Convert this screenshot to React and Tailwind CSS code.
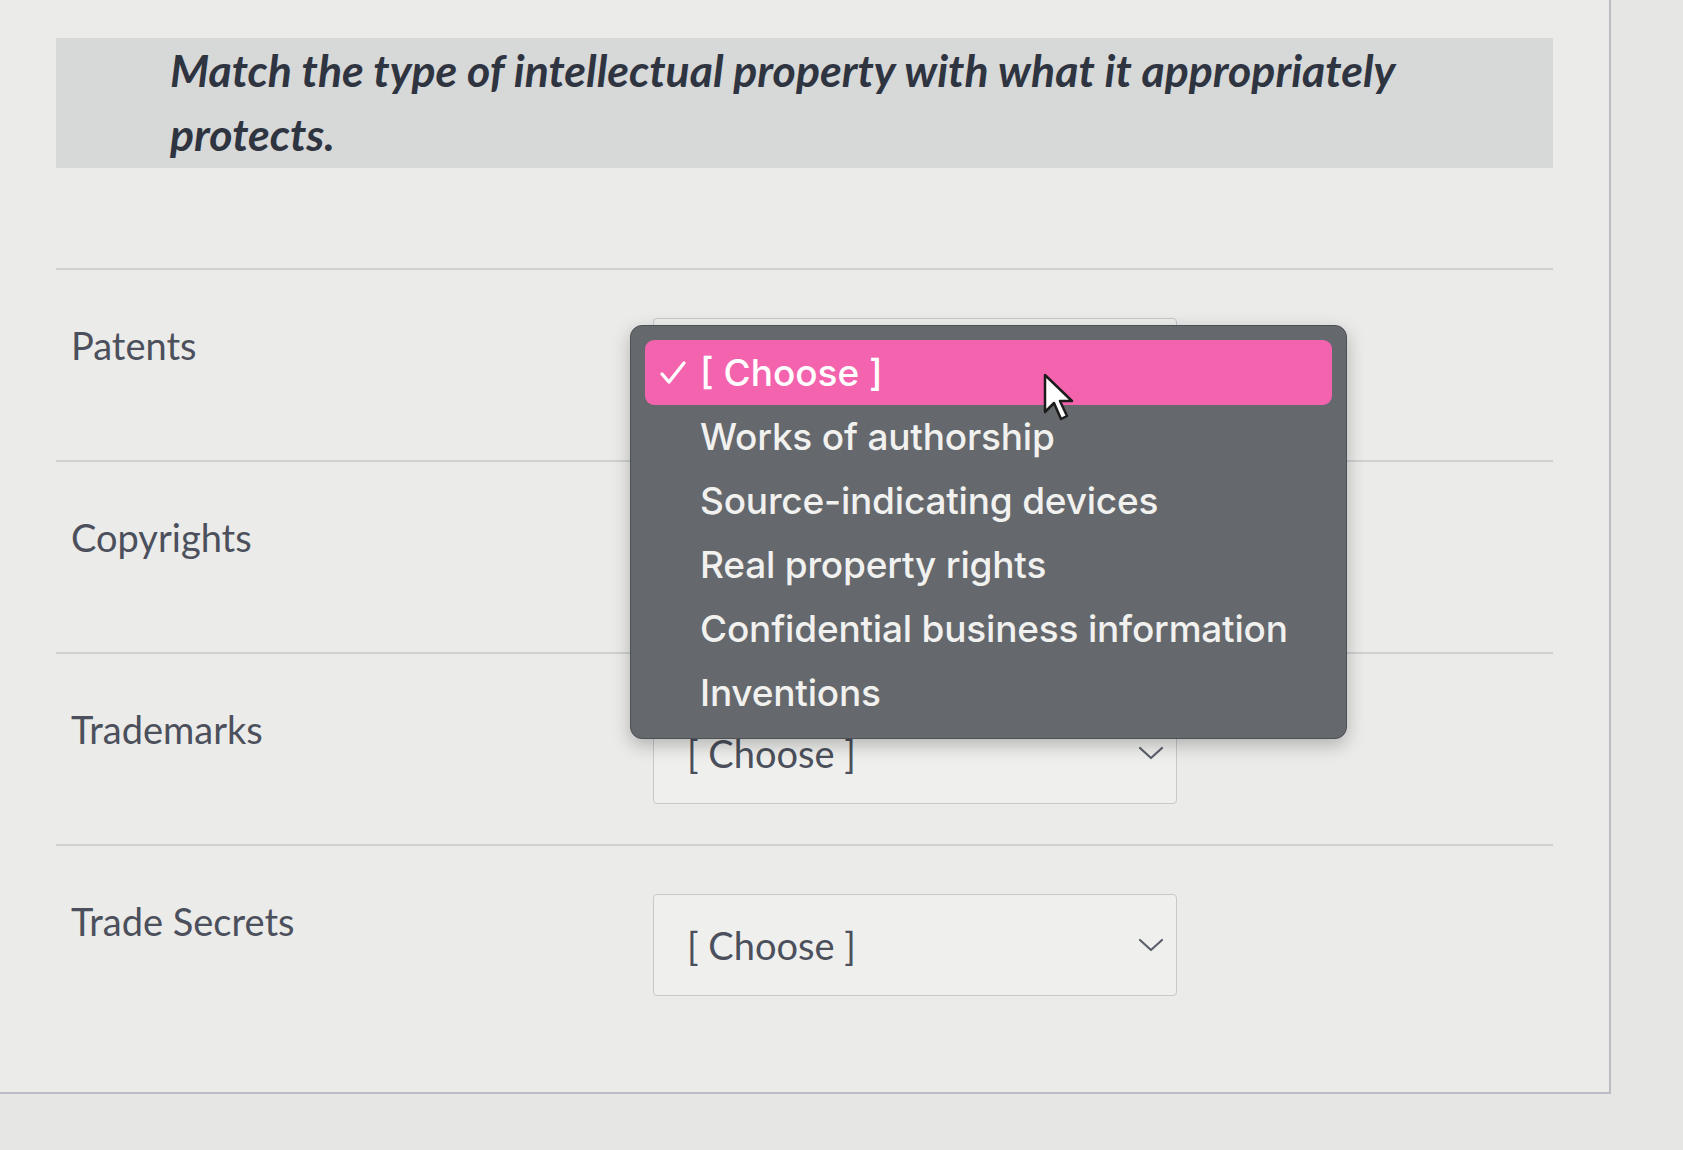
import React from 'react';

const rows = ['Patents', 'Copyrights', 'Trademarks', 'Trade Secrets'];
const options = [
    'Works of authorship',
    'Source-indicating devices',
    'Real property rights',
    'Confidential business information',
    'Inventions',
];

const Chevron = () => (
    <svg width="26" height="14" viewBox="0 0 26 14" fill="none">
        <path d="M2 2 L13 12 L24 2" stroke="#5a5f6b" strokeWidth="2.2" strokeLinecap="round" strokeLinejoin="round" />
    </svg>
);

const Check = () => (
    <svg width="28" height="26" viewBox="0 0 28 26" fill="none">
        <path d="M3 14 L10 22 L25 3" stroke="#ffffff" strokeWidth="3.4" strokeLinecap="round" strokeLinejoin="round" />
    </svg>
);

const Select = () => (
    <div className="flex h-[102px] w-[524px] items-center justify-between rounded-[4px] border border-[#c7c8ca] bg-[#efefed] pl-[33px] pr-[12px]">
        <span className="text-[38px] text-[#4b505c]">[ Choose ]</span>
        <Chevron />
    </div>
);

const Dropdown = () => (
    <div className="absolute left-[630px] top-[325px] w-[717px] rounded-[12px] border border-[#4d5054] bg-[#65686c] px-[14px] pb-[13px] pt-[14px] shadow-[0_6px_18px_rgba(0,0,0,0.25)] [font-family:Inter,'Liberation_Sans',sans-serif]">
        <div className="flex h-[65px] items-center rounded-[9px] bg-[#f463ae] pl-[14px] text-[37px] font-medium text-white">
            <span className="flex w-[41px] items-center">
                <Check />
            </span>
            <span>[ Choose ]</span>
        </div>
        {options.map((o) => (
            <div key={o} className="flex h-[64px] items-center pl-[55px] text-[37px] font-medium tracking-[-0.2px] text-[#f1f1f0]">
                {o}
            </div>
        ))}
    </div>
);

const Cursor = () => (
    <svg className="absolute left-[1042px] top-[372px]" width="34" height="52" viewBox="0 0 34 52">
        <path d="M3 3 L3 40 L12 31 L19 47 L25 44 L18 29 L30 29 Z" fill="#ffffff" stroke="#1c1c1c" strokeWidth="2.5" strokeLinejoin="round" />
    </svg>
);

export default function App() {
    return (
        <div className="relative flex h-[1150px] w-full bg-[#e6e6e4] [font-family:Lato,'Liberation_Sans',sans-serif]">
            <div className="flex h-[1094px] w-[1611px] flex-col border-b-2 border-r-2 border-[#b9bcc4] bg-[#ebebe9] px-[56px] pt-[38px]">
                {/* question text */}
                <div className="h-[130px] w-[1497px] bg-[#d7d8d8] pl-[114px] text-[44.6px] font-bold italic leading-[64px] text-[#2f3441]">
                    Match the type of intellectual property with what it appropriately
                    <br />
                    protects.
                </div>

                <div className="mt-[100px] flex flex-col">
                    {rows.map((r) => (
                        <div key={r} className="flex h-[192px] border-t-2 border-[#cfd0d0] pt-[48px]">
                            <div className="w-[597px] pl-[15px] pt-[4px] text-[38px] leading-[46px] text-[#4b505c]">{r}</div>
                            <Select />
                        </div>
                    ))}
                </div>
            </div>

            <Dropdown />
            <Cursor />
        </div>
    );
}
